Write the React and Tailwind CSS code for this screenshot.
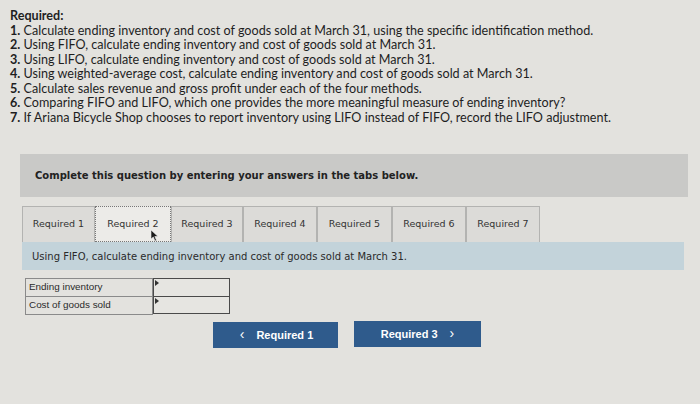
import React from 'react';

const requirements = [
  ['1.', 'Calculate ending inventory and cost of goods sold at March 31, using the specific identification method.'],
  ['2.', 'Using FIFO, calculate ending inventory and cost of goods sold at March 31.'],
  ['3.', 'Using LIFO, calculate ending inventory and cost of goods sold at March 31.'],
  ['4.', 'Using weighted-average cost, calculate ending inventory and cost of goods sold at March 31.'],
  ['5.', 'Calculate sales revenue and gross profit under each of the four methods.'],
  ['6.', 'Comparing FIFO and LIFO, which one provides the more meaningful measure of ending inventory?'],
  ['7.', 'If Ariana Bicycle Shop chooses to report inventory using LIFO instead of FIFO, record the LIFO adjustment.'],
];

const tabs = [
  { label: 'Required 1', w: 'w-[73px]' },
  { label: 'Required 2', w: 'w-[76px]', active: true },
  { label: 'Required 3', w: 'w-[72px]' },
  { label: 'Required 4', w: 'w-[74px]' },
  { label: 'Required 5', w: 'w-[75px]' },
  { label: 'Required 6', w: 'w-[74px]' },
  { label: 'Required 7', w: 'w-[74px]' },
];

const Cursor = () => (
  <svg className="absolute left-[54px] top-[22px]" width="9" height="13" viewBox="0 0 9 13">
    <path d="M1 1 L1 10 L3.3 8 L5 12 L6.5 11.3 L4.8 7.5 L8 7.5 Z" fill="#1a1a1a" stroke="#eee" strokeWidth="0.6" />
  </svg>
);

function Tab({ label, w, active }) {
  return (
    <div
      className={`relative ${w} h-[36px] flex items-center justify-center text-[9.5px] text-[#333] ${
        active
          ? 'bg-[#ecebe8] border border-dotted border-[#777]'
          : 'bg-[#dcdbd8] border border-[#b3b3b1] border-b-0'
      }`}
      style={{ fontFamily: 'Verdana, "DejaVu Sans", sans-serif' }}
    >
      {label}
      {active && <Cursor />}
    </div>
  );
}

function InputCell({ last }) {
  return (
    <div className={`relative w-[77px] h-[18px] bg-[#e6e5e1] border-[1.5px] border-[#4a4a4a] ${last ? '' : 'border-b-0'}`}>
      <span className="absolute left-[1px] top-[1px] w-0 h-0 border-t-[3px] border-b-[3px] border-l-[4px] border-t-transparent border-b-transparent border-l-[#333]"></span>
    </div>
  );
}

export default function App() {
  return (
    <div className="w-[700px] h-[404px] overflow-hidden bg-[#e3e2de] text-[#1e1e1e]">
      <div
        className="pl-[10px] pt-[9px] text-[12.6px] leading-[14.5px]"
        style={{ fontFamily: 'Lato, "Open Sans", sans-serif' }}
      >
        <div className="font-bold">Required:</div>
        {requirements.map(([n, t]) => (
          <div key={n}>
            <span className="font-bold">{n}</span> {t}
          </div>
        ))}
      </div>

      <div
        className="ml-[20px] mt-[29px] w-[668px] h-[43px] bg-[#c9c9c7] flex items-center pl-[15px] text-[10px] font-bold text-[#222]"
        style={{ fontFamily: 'Verdana, "DejaVu Sans", sans-serif' }}
      >
        Complete this question by entering your answers in the tabs below.
      </div>

      <div className="ml-[22px] mt-[9px] flex">
        {tabs.map((t) => (
          <Tab key={t.label} {...t} />
        ))}
      </div>

      <div
        className="ml-[22px] w-[662px] h-[28px] bg-[#c3d3da] flex items-center pl-[10px] text-[10px] text-[#2a2a2a]"
        style={{ fontFamily: 'Verdana, "DejaVu Sans", sans-serif' }}
      >
        Using FIFO, calculate ending inventory and cost of goods sold at March 31.
      </div>

      <div
        className="ml-[25px] mt-[8px] flex text-[9.9px] text-[#2a2a2a]"
        style={{ fontFamily: '"Liberation Sans", Arial, sans-serif' }}
      >
        <div className="w-[128px] border border-[#8a8a8a]">
          <div className="h-[18px] flex items-center pl-[3px] border-b border-[#8a8a8a]">Ending inventory</div>
          <div className="h-[17px] flex items-center pl-[3px]">Cost of goods sold</div>
        </div>
        <div className="flex flex-col">
          <InputCell />
          <InputCell last />
        </div>
      </div>

      <div
        className="ml-[213px] mt-[7px] flex gap-[16px] text-[11px] font-bold text-white"
        style={{ fontFamily: '"Liberation Sans", Arial, sans-serif' }}
      >
        <div className="w-[125px] h-[26px] bg-[#2f5b8c] flex items-center justify-center gap-[12px] pl-[2px]">
          <span className="font-normal text-[14px] leading-none -mt-[2px]">&lsaquo;</span>
          <span>Required 1</span>
        </div>
        <div className="w-[127px] h-[26px] bg-[#2f5b8c] flex items-center justify-center gap-[12px] -mt-[1px]">
          <span>Required 3</span>
          <span className="font-normal text-[14px] leading-none -mt-[2px]">&rsaquo;</span>
        </div>
      </div>
    </div>
  );
}
